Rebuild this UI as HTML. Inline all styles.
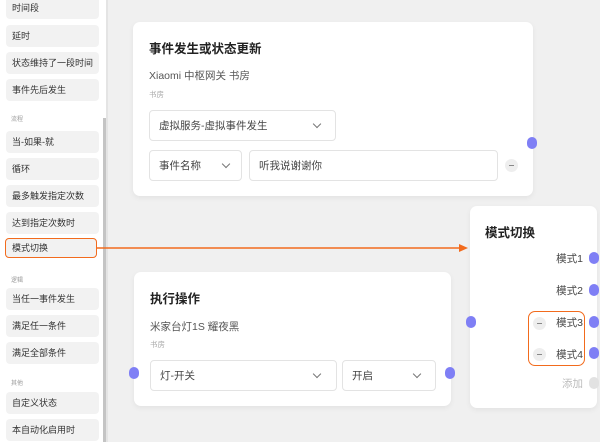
<!DOCTYPE html>
<html><head><meta charset="utf-8"><style>
*{margin:0;padding:0;box-sizing:border-box}
body{width:600px;height:442px;overflow:hidden;background:#f0f0f0;font-family:"Liberation Sans","Noto Sans CJK SC",sans-serif;position:relative;color:#333}
.sb{position:absolute;left:0;top:0;width:108px;height:442px;background:#fff;border-right:2px solid #e4e4e4}
.it{position:absolute;left:6px;width:93px;height:22px;background:#f2f2f2;border-radius:4px;font-size:9px;line-height:22px;padding-left:6px;color:#333}
.lb{position:absolute;left:11px;font-size:6px;color:#999}
.scr{position:absolute;left:103px;top:118px;width:3px;height:324px;background:#c4c4c4}
.card{position:absolute;background:#fff;border-radius:7px;box-shadow:0 2px 6px rgba(0,0,0,.06)}
.t{position:absolute;font-size:12.5px;font-weight:bold;color:#222}
.d{position:absolute;font-size:10.5px;color:#555}
.s{position:absolute;font-size:7.5px;color:#aaa}
.box{position:absolute;border:1px solid #e3e3e3;border-radius:4px;font-size:10.5px;line-height:30px;padding-left:9px;color:#444;background:#fff}
.chev{position:absolute;top:11px;width:6px;height:6px;border-right:1.2px solid #777;border-bottom:1.2px solid #777;transform:rotate(45deg)}
.dot{position:absolute;width:10px;height:12px;background:#7f7ff5;border-radius:6px}
.m{position:absolute;right:14px;font-size:10.5px;color:#444;text-align:right}
.mi{position:absolute;width:13px;height:13px;border-radius:50%;background:#eee}
.mi::after{content:"";position:absolute;left:4px;top:6px;width:5px;height:1px;background:#888}
</style></head><body>
<div class="sb">
<div class="it" style="top:-3px">时间段</div>
<div class="it" style="top:25px">延时</div>
<div class="it" style="top:52px">状态维持了一段时间</div>
<div class="it" style="top:79px">事件先后发生</div>
<div class="lb" style="top:114px">流程</div>
<div class="it" style="top:131px">当-如果-就</div>
<div class="it" style="top:158px">循环</div>
<div class="it" style="top:185px">最多触发指定次数</div>
<div class="it" style="top:212px">达到指定次数时</div>
<div class="it" style="top:238px;left:5px;width:92px;height:20px;line-height:18px;border:1.5px solid #f26b1d;padding-left:6px">模式切换</div>
<div class="lb" style="top:275px">逻辑</div>
<div class="it" style="top:288px">当任一事件发生</div>
<div class="it" style="top:315px">满足任一条件</div>
<div class="it" style="top:342px">满足全部条件</div>
<div class="lb" style="top:378px">其他</div>
<div class="it" style="top:392px">自定义状态</div>
<div class="it" style="top:419px">本自动化启用时</div>
<div class="scr"></div>
</div>

<div class="card" style="left:133px;top:22px;width:400px;height:174px">
<div class="t" style="left:16px;top:16px">事件发生或状态更新</div>
<div class="d" style="left:16px;top:46px">Xiaomi 中枢网关 书房</div>
<div class="s" style="left:16px;top:67px">书房</div>
<div class="box" style="left:16px;top:88px;width:187px;height:31px">虚拟服务-虚拟事件发生<div class="chev" style="left:164px;top:10px"></div></div>
<div class="box" style="left:16px;top:128px;width:93px;height:31px">事件名称<div class="chev" style="left:73px;top:10px"></div></div>
<div class="box" style="left:116px;top:128px;width:249px;height:31px">听我说谢谢你</div>
<div class="mi" style="left:372px;top:137px"></div>
</div>
<div class="dot" style="left:527px;top:137px"></div>

<div class="card" style="left:134px;top:272px;width:317px;height:134px">
<div class="t" style="left:16px;top:16px">执行操作</div>
<div class="d" style="left:16px;top:47px">米家台灯1S 耀夜黑</div>
<div class="s" style="left:16px;top:67px">书房</div>
<div class="box" style="left:16px;top:88px;width:187px;height:31px">灯-开关<div class="chev" style="left:163px;top:10px"></div></div>
<div class="box" style="left:208px;top:88px;width:94px;height:31px">开启<div class="chev" style="left:71px;top:10px"></div></div>
</div>
<div class="dot" style="left:129px;top:367px"></div>
<div class="dot" style="left:445px;top:367px"></div>

<div class="card" style="left:470px;top:206px;width:127px;height:202px">
<div class="t" style="left:15px;top:16px">模式切换</div>
<div class="m" style="top:45px">模式1</div>
<div class="m" style="top:77px">模式2</div>
<div class="m" style="top:109px">模式3</div>
<div class="m" style="top:141px">模式4</div>
<div class="mi" style="left:63px;top:111px"></div>
<div class="mi" style="left:63px;top:142px"></div>
<div class="m" style="top:170px;color:#bbb">添加</div>
</div>
<div style="position:absolute;left:528px;top:311px;width:57px;height:55px;border:1.5px solid #f26b1d;border-radius:7px"></div>
<div class="dot" style="left:589px;top:252px"></div>
<div class="dot" style="left:589px;top:284px"></div>
<div class="dot" style="left:589px;top:316px"></div>
<div class="dot" style="left:589px;top:347px"></div>
<div class="dot" style="left:589px;top:377px;background:#e2e2e2"></div>
<div class="dot" style="left:466px;top:316px"></div>

<svg style="position:absolute;left:0;top:0" width="600" height="442">
<line x1="97" y1="248" x2="462" y2="248" stroke="#f26b1d" stroke-width="1.5"/>
<polygon points="468,248 459,244 459,252" fill="#f26b1d"/>
</svg>
</body></html>
